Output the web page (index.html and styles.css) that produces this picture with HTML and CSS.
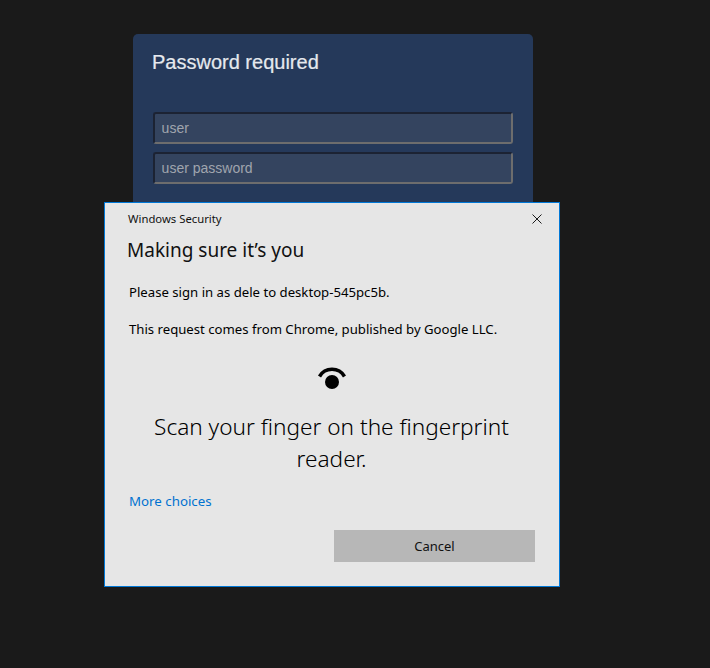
FILE: index.html
```html
<!DOCTYPE html>
<html lang="en">
<head>
  <meta charset="UTF-8" />
  <meta name="viewport" content="width=device-width, initial-scale=1.0"/>
  <title>Password required</title>
  <link rel="stylesheet" href="styles.css">
</head>
<body>

  <!-- Login card behind the dialog -->
  <div class="card">
    <h1>Password required</h1>
    <input class="field" type="text" placeholder="user" />
    <input class="field" type="password" placeholder="user password" />
  </div>

  <!-- Windows Security dialog -->
  <div class="dialog">
    <div class="titlebar">
      <span class="app-name">Windows Security</span>
      <svg class="close" width="10" height="10" viewBox="0 0 10 10">
        <path d="M0.5 0.5L9.5 9.5M9.5 0.5L0.5 9.5" stroke="#1a1a1a" stroke-width="1" fill="none"/>
      </svg>
    </div>
    <h2>Making sure it’s you</h2>
    <p class="line">Please sign in as dele to desktop-545pc5b.</p>
    <p class="line">This request comes from Chrome, published by Google LLC.</p>
    <svg class="finger" width="30" height="24" viewBox="0 0 30 24">
      <path d="M2.5 11.5A14.5 14.5 0 0 1 27.5 11.5" stroke="#000" stroke-width="3.5" fill="none"/>
      <circle cx="15" cy="17" r="7" fill="#000"/>
    </svg>
    <p class="prompt">Scan your finger on the fingerprint reader.</p>
    <a class="more" href="#">More choices</a>
    <div class="actions">
      <button class="cancel">Cancel</button>
    </div>
  </div>

</body>
</html>
```

FILE: styles.css
```css
html, body {
  height: 100%;
}
body {
  margin: 0;
  background-color: #1a1a1a;
  font-family: "Liberation Sans", Arial, sans-serif;
  overflow: hidden;
}
.card {
  box-sizing: border-box;
  width: 400px;
  height: 300px;
  margin: 34px 0 0 133px;
  padding: 16px 20px;
  background-color: #25395a;
  border-radius: 5px;
}
.card h1 {
  margin: 0 0 38px -1px;
  font-size: 20px;
  font-weight: normal;
  line-height: 24px;
  color: #e6e9ee;
  -webkit-text-stroke: 0.2px #e6e9ee;
}
.field {
  display: block;
  box-sizing: border-box;
  width: 360px;
  height: 32px;
  margin-bottom: 8px;
  padding: 0 7px 0 6.6px;
  background-color: #34445f;
  border: 2px solid #6d6d6d;
  border-top-color: #1c2333;
  border-left-color: #1c2333;
  border-radius: 3px;
  font-family: inherit;
  font-size: 14px;
}
.field::placeholder {
  color: #a0a5ae;
  opacity: 1;
}
.dialog {
  position: absolute;
  left: 104px;
  top: 202px;
  box-sizing: border-box;
  width: 456px;
  height: 385px;
  padding: 0 24px 0 23px;
  background-color: #e6e6e6;
  border: 1px solid #0078d7;
  font-family: "Noto Sans", "Open Sans", sans-serif;
  color: #000;
}
.titlebar {
  display: flex;
  justify-content: space-between;
  align-items: center;
  height: 30px;
}
.app-name {
  font-size: 11.3px;
  color: #111;
}
.close {
  margin: 2px -7px 0 0;
}
.dialog h2 {
  margin: 4px 0 20px -1px;
  font-size: 19px;
  font-weight: normal;
  line-height: 26px;
  color: #111;
}
.line {
  margin: 0 0 19px 1px;
  font-size: 13.17px;
  line-height: 18px;
}
.finger {
  display: block;
  margin: 27px auto 0;
}
.prompt {
  margin: 22px 0 0;
  padding: 0 15px;
  font-size: 22.6px;
  font-weight: 300;
  line-height: 32px;
  text-align: center;
  color: #000;
}
.more {
  display: block;
  margin: 17px 0 0 1px;
  font-size: 13.3px;
  line-height: 18px;
  color: #0072d0;
  text-decoration: none;
}
.actions {
  display: flex;
  justify-content: flex-end;
  margin-top: 20px;
}
.cancel {
  width: 201px;
  height: 32px;
  background-color: #b7b7b7;
  border: none;
  font-family: inherit;
  font-size: 13px;
  color: #111;
}
```
